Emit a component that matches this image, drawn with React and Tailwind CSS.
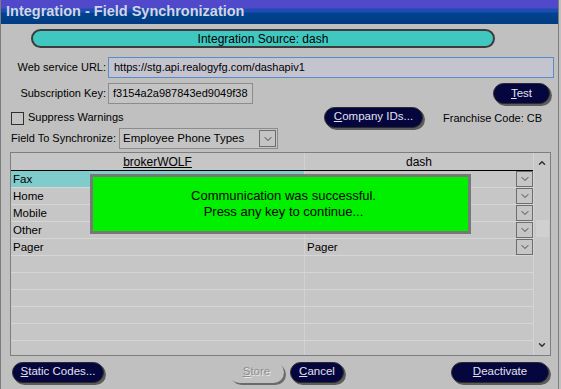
import React from 'react';
import { ChevronDown, ChevronUp } from 'lucide-react';

const font = { fontFamily: '"Liberation Sans", Arial, sans-serif' };

function NavyBtn({ first, rest, className }) {
    return (
        <button
            type="button"
            className={`h-[21px] rounded-full bg-[#06063e] border border-[#2a2a2a] shadow-[2px_2px_0_#5c5c5c] text-[#e2e2f0] text-[11.5px] leading-none ${className}`}
        >
            <span className="underline">{first}</span>{rest}
        </button>
    );
}

function Caret({ className }) {
    return (
        <div className={`w-[17px] h-[16px] border border-[#6e6e6e] flex items-center justify-center ${className}`}>
            <ChevronDown size={12} strokeWidth={1.7} color="#2e2e2e" />
        </div>
    );
}

const rows = ['Fax', 'Home', 'Mobile', 'Other', 'Pager', '', '', '', '', ''];

export default function App() {
    return (
        <div style={font} className="relative w-[561px] h-[389px] bg-[#c0c0c0] overflow-hidden text-[11px] text-black">
            <div className="w-[559px] h-[389px] border-l border-r border-[#7c7c7c] flex flex-col">
                {/* title bar */}
                <div className="h-[24px] pl-[5px] flex items-center bg-[linear-gradient(#5248cc_0px,#4e4ac8_8px,#1c4cb4_9px,#1c4cb4_12px,#024290_13px,#003c80_24px)]">
                    <span className="text-[14.5px] font-bold text-[#d4d4e6]">Integration - Field Synchronization</span>
                </div>

                {/* source pill */}
                <div className="mt-[5px] ml-[30px] w-[464px] h-[19px] rounded-full bg-[#40c8c0] border-2 border-[#3c3c3c] flex items-center justify-center text-[12px] leading-none">
                    Integration Source: dash
                </div>

                {/* url */}
                <div className="mt-[9px] h-[21px] flex items-center">
                    <div className="w-[106px] text-right pr-[1px]">Web service URL:</div>
                    <div className="ml-[1px] w-[446px] h-[21px] border border-[#5a8ccc] bg-[#c4c4ce] flex items-center pl-[5px]">
                        https://stg.api.realogyfg.com/dashapiv1
                    </div>
                </div>

                {/* subscription key */}
                <div className="mt-[5px] h-[21px] flex items-center">
                    <div className="w-[106px] text-right pr-[1px]">Subscription Key:</div>
                    <div className="ml-[1px] w-[145px] h-[21px] border border-[#8c8c8c] bg-[#c4c4c4] flex items-center pl-[4px] overflow-hidden whitespace-nowrap">
                        f3154a2a987843ed9049f38
                    </div>
                    <NavyBtn first="T" rest="est" className="ml-[240px] w-[57px]" />
                </div>

                {/* suppress + company ids */}
                <div className="mt-[3px] h-[20px] flex items-center">
                    <div className="w-[323px] pl-[10px] flex items-center">
                        <div className="w-[13px] h-[13px] border border-[#303030] bg-[#c4c4c4] mt-[2px]" />
                        <span className="ml-[4px]">Suppress Warnings</span>
                    </div>
                    <NavyBtn first="C" rest="ompany IDs..." className="w-[99px]" />
                    <span className="ml-[20px] mt-[2px]">Franchise Code: CB</span>
                </div>

                {/* field to synchronize */}
                <div className="mt-[1px] h-[21px] flex items-center">
                    <div className="w-[118px] pl-[10px] whitespace-nowrap">Field To Synchronize:</div>
                    <div className="w-[159px] h-[21px] border border-[#8c8c8c] bg-[#c4c4c4] flex items-center pl-[3px] pr-[1px]">
                        <span className="flex-1 text-[11.5px]">Employee Phone Types</span>
                        <Caret className="h-[17px]" />
                    </div>
                </div>

                {/* table */}
                <div className="mt-[3px] ml-[9px] w-[541px] h-[204px] border border-[#7e7e7e] bg-[#c6c6c6] flex">
                    <div className="flex-1 flex flex-col">
                        <div className="h-[18px] flex border-b border-black text-[12px]">
                            <div className="w-[293px] text-center leading-[18px] underline">brokerWOLF</div>
                            <div className="flex-1 text-center leading-[18px] border-l border-[#d2d2d2]">dash</div>
                        </div>
                        {rows.map((r, i) => (
                            <div key={i} className="h-[17px] flex border-b border-[#d6d6d6] text-[11.5px]">
                                <div className={`w-[293px] pl-[2px] leading-[16px] ${i === 0 ? 'bg-[#80cccc]' : ''}`}>{r}</div>
                                <div className="flex-1 flex border-l border-[#d2d2d2]">
                                    <span className="flex-1 pl-[2px] leading-[16px]">{r}</span>
                                    {r && <Caret />}
                                </div>
                            </div>
                        ))}
                        <div className="flex-1 flex">
                            <div className="w-[293px]" />
                            <div className="flex-1 border-l border-[#d2d2d2]" />
                        </div>
                    </div>
                    <div className="w-[17px] bg-[#c8c8c8] border-l border-[#d4d4d4] flex flex-col items-center">
                        <ChevronUp size={10} strokeWidth={3.5} color="#303030" className="mt-[5px]" />
                        <div className="mt-[52px] w-[13px] h-[17px] bg-[#d0d0d0]" />
                        <div className="flex-1" />
                        <ChevronDown size={10} strokeWidth={3.5} color="#303030" className="mb-[5px]" />
                    </div>
                </div>

                {/* bottom buttons */}
                <div className="mt-[5px] h-[22px] flex items-center">
                    <NavyBtn first="S" rest="tatic Codes..." className="ml-[11px] w-[92px]" />
                    <button
                        type="button"
                        className="ml-[125px] w-[55px] h-[21px] rounded-full shadow-[2px_2px_0_#6a6a6a] text-[#8e8e8e] text-[11.5px] leading-none [text-shadow:1px_1px_0_#e8e8e8]"
                    >
                        <span className="underline">S</span>tore
                    </button>
                    <NavyBtn first="C" rest="ancel" className="ml-[6px] w-[54px]" />
                    <NavyBtn first="D" rest="eactivate" className="ml-[107px] w-[98px]" />
                </div>
            </div>

            {/* message overlay */}
            <div className="absolute left-[90px] top-[174px] w-[381px] h-[60px] bg-[#00f000] border-[3px] border-[#787878] flex flex-col items-center justify-center text-[13px] leading-[16px] pl-[6px]">
                <div>Communication was successful.</div>
                <div>Press any key to continue...</div>
            </div>
        </div>
    );
}
